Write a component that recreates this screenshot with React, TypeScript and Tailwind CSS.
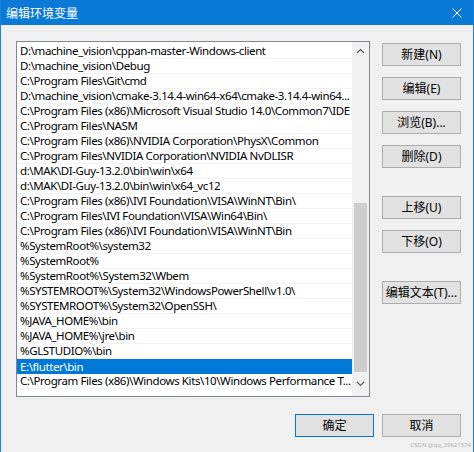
import React from 'react'

const paths = [
  'D:\\machine_vision\\cppan-master-Windows-client',
  'D:\\machine_vision\\Debug',
  'C:\\Program Files\\Git\\cmd',
  'D:\\machine_vision\\cmake-3.14.4-win64-x64\\cmake-3.14.4-win64...',
  'C:\\Program Files (x86)\\Microsoft Visual Studio 14.0\\Common7\\IDE',
  'C:\\Program Files\\NASM',
  'C:\\Program Files (x86)\\NVIDIA Corporation\\PhysX\\Common',
  'C:\\Program Files\\NVIDIA Corporation\\NVIDIA NvDLISR',
  'd:\\MAK\\DI-Guy-13.2.0\\bin\\win\\x64',
  'd:\\MAK\\DI-Guy-13.2.0\\bin\\win\\x64_vc12',
  'C:\\Program Files (x86)\\IVI Foundation\\VISA\\WinNT\\Bin\\',
  'C:\\Program Files\\IVI Foundation\\VISA\\Win64\\Bin\\',
  'C:\\Program Files (x86)\\IVI Foundation\\VISA\\WinNT\\Bin',
  '%SystemRoot%\\system32',
  '%SystemRoot%',
  '%SystemRoot%\\System32\\Wbem',
  '%SYSTEMROOT%\\System32\\WindowsPowerShell\\v1.0\\',
  '%SYSTEMROOT%\\System32\\OpenSSH\\',
  '%JAVA_HOME%\\bin',
  '%JAVA_HOME%\\jre\\bin',
  '%GLSTUDIO%\\bin',
  'E:\\flutter\\bin',
  'C:\\Program Files (x86)\\Windows Kits\\10\\Windows Performance T...',
]

const selected = 21

const WinButton = ({ label, primary }: { label: string; primary?: boolean }) => (
  <button
    className={
      primary
        ? 'flex h-[23px] w-[79px] items-center justify-center border border-[#0078d7] bg-[#e1e1e1] text-[12px] text-black'
        : 'flex h-[23px] w-[79px] items-center justify-center border border-[#adadad] bg-[#e1e1e1] text-[12px] text-black'
    }
  >
    {label}
  </button>
)

export default function App() {
  return (
    <div
      className="flex h-[452px] w-[474px] flex-col border-x border-[#1883d7] bg-[#f0f0f0]"
      style={{ fontFamily: '"Noto Sans", "Noto Sans CJK SC", sans-serif' }}
    >
      {/* title bar */}
      <div className="flex h-[25px] shrink-0 items-center justify-between bg-[#0a7ad6] pl-[5px] pr-[10px] text-white">
        <span className="text-[12px]" style={{ fontFamily: '"Noto Sans CJK SC", sans-serif' }}>
          编辑环境变量
        </span>
        <svg width="10" height="10" viewBox="0 0 10 10" className="mr-[1px]">
          <path d="M0.5 0.5 L9.5 9.5 M9.5 0.5 L0.5 9.5" stroke="white" strokeWidth="1" />
        </svg>
      </div>

      <div className="flex items-start pl-[15px] pt-[16px]">
        {/* list box */}
        <div className="flex h-[356px] w-[354px] shrink-0 border border-[#828790] bg-white">
          <div className="min-w-0 flex-1 overflow-hidden pt-[2px]">
            {paths.map((p, i) => (
              <div
                key={i}
                className={
                  i === selected
                    ? 'flex h-[15px] items-center overflow-hidden whitespace-nowrap bg-[#0078d7] pl-[3px] text-[11.5px] leading-none tracking-[-0.4px] text-white'
                    : 'flex h-[15px] items-center overflow-hidden whitespace-nowrap border-b border-[#f3f3f3] pl-[3px] text-[11.5px] leading-none tracking-[-0.4px] text-black'
                }
              >
                {p}
              </div>
            ))}
          </div>
          {/* scrollbar */}
          <div className="flex w-[17px] shrink-0 flex-col bg-[#f0f0f0]">
            <div className="flex h-[17px] items-center justify-center">
              <svg width="9" height="6" viewBox="0 0 9 6">
                <path d="M1 5 L4.5 1.5 L8 5" stroke="#606060" strokeWidth="1.2" fill="none" />
              </svg>
            </div>
            <div className="h-[144px]" />
            <div className="mx-[2px] h-[169px] bg-[#cdcdcd]" />
            <div className="flex flex-1 items-center justify-center">
              <svg width="9" height="6" viewBox="0 0 9 6">
                <path d="M1 1 L4.5 4.5 L8 1" stroke="#606060" strokeWidth="1.2" fill="none" />
              </svg>
            </div>
          </div>
        </div>

        {/* side buttons */}
        <div className="ml-[12px] flex flex-col pt-[2px]">
          <div className="flex flex-col gap-[11px]">
            <WinButton label="新建(N)" />
            <WinButton label="编辑(E)" />
            <WinButton label="浏览(B)..." />
            <WinButton label="删除(D)" />
          </div>
          <div className="mt-[28px] flex flex-col gap-[11px]">
            <WinButton label="上移(U)" />
            <WinButton label="下移(O)" />
          </div>
          <div className="mt-[28px]">
            <WinButton label="编辑文本(T)..." />
          </div>
        </div>
      </div>

      {/* bottom buttons */}
      <div className="mt-[17px] flex justify-end gap-[8px] pr-[12px]">
        <WinButton label="确定" primary />
        <WinButton label="取消" />
      </div>
      <div className="mt-auto flex justify-end pb-[2px] pr-[2px] text-[6px] text-[#b0b0b0]">
        CSDN @qq_39621574
      </div>
    </div>
  )
}
